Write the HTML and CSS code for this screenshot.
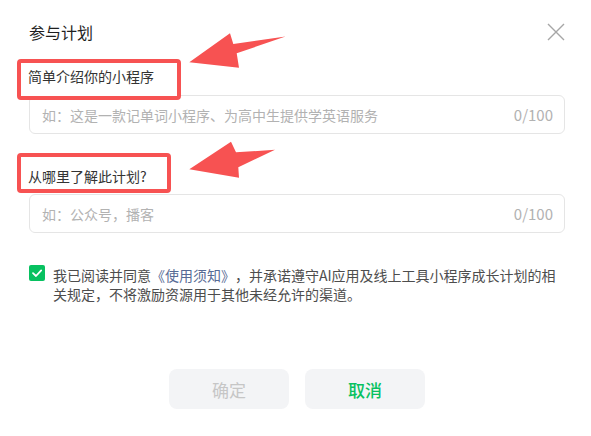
FILE: index.html
```html
<!DOCTYPE html>
<html lang="zh-CN">
<head>
    <meta charset="UTF-8">
    <meta name="viewport" content="width=device-width, initial-scale=1.0">
    <title>参与计划</title>
    <link rel="stylesheet" href="styles.css">
</head>
<body>
    <div class="dialog">
        <div class="dialog-header">
            <h2 class="dialog-title">参与计划</h2>
            <button class="close-btn" aria-label="关闭">
                <svg width="18" height="18" viewBox="0 0 18 18">
                    <path d="M1 1 L17 17 M17 1 L1 17" stroke="#a6a6a6" stroke-width="1.4" fill="none"/>
                </svg>
            </button>
        </div>

        <div class="mark mark-first">
            <label for="intro">简单介绍你的小程序</label>
        </div>
        <div class="text-field text-field-first">
            <input type="text" id="intro" placeholder="如：这是一款记单词小程序、为高中生提供学英语服务">
            <span class="counter">0/100</span>
        </div>

        <div class="mark mark-second">
            <label for="source">从哪里了解此计划?</label>
        </div>
        <div class="text-field text-field-second">
            <input type="text" id="source" placeholder="如：公众号，播客">
            <span class="counter">0/100</span>
        </div>

        <div class="agreement">
            <span class="checkbox">
                <svg width="16" height="16" viewBox="0 0 16 16">
                    <path d="M4 8.2 L7 11 L12.2 5.4" stroke="#fff" stroke-width="1.8" fill="none" stroke-linecap="round" stroke-linejoin="round"/>
                </svg>
            </span>
            <p class="agreement-text">我已阅读并同意<a href="#">《使用须知》</a>，并承诺遵守AI应用及线上工具小程序成长计划的相关规定，不将激励资源用于其他未经允许的渠道。</p>
        </div>

        <div class="actions">
            <button class="btn btn-confirm" disabled>确定</button>
            <button class="btn btn-cancel">取消</button>
        </div>

        <!-- annotation arrows -->
        <svg class="arrows" width="591" height="436" viewBox="0 0 591 436">
            <polygon points="189.3,62.3 230,33.3 233.3,44 285.5,36.5 236.7,53.3 239,67.7" fill="#f75252"/>
            <polygon points="189.3,169.3 231,141.7 236,152.3 275,149.8 238.3,167.3 239,177.7" fill="#f75252"/>
        </svg>
    </div>
</body>
</html>
```

FILE: styles.css
```css
:root {
    --wx-green: #07c160;
    --mark-red: #f75252;
    --text: #333333;
    --text-light: #b2b2b2;
    --line: #e5e5e5;
}

* {
    margin: 0;
    padding: 0;
    box-sizing: border-box;
}

body {
    background: #ffffff;
    font-family: "Noto Sans CJK SC", "Noto Sans", "Liberation Sans", sans-serif;
    color: var(--text);
    text-spacing-trim: space-all;
}

.dialog {
    position: relative;
    width: 591px;
    height: 436px;
    padding: 21px 26px 0 29px;
}

.dialog-header {
    display: flex;
    justify-content: space-between;
    align-items: center;
    height: 22px;
}

.dialog-title {
    font-size: 16px;
    font-weight: 400;
    line-height: 22px;
    color: #1f1f1f;
}

.close-btn {
    display: flex;
    background: none;
    border: none;
    cursor: pointer;
}

.mark {
    position: relative;
    z-index: 1;
    display: flex;
    align-items: center;
    margin-left: -12px;
    border: 4px solid var(--mark-red);
    border-radius: 4px;
    background: #ffffff;
}

.mark label {
    font-size: 14px;
    line-height: 20px;
    color: var(--text);
}

.mark-first {
    width: 164px;
    height: 41px;
    margin-top: 16px;
    padding: 0 0 7px 7px;
}

.mark-second {
    width: 154px;
    height: 40px;
    margin-top: 19px;
    padding: 6px 0 0 7px;
}

.text-field {
    display: flex;
    align-items: center;
    height: 39px;
    padding: 0 11px 0 12px;
    border: 1px solid var(--line);
    border-radius: 6px;
}

.text-field-first {
    margin-top: -5px;
}

.text-field-second {
    margin-top: 1px;
}

.text-field input {
    flex: 1;
    min-width: 0;
    border: none;
    outline: none;
    font-family: inherit;
    font-size: 14px;
    color: var(--text);
    background: transparent;
}

.text-field input::placeholder {
    color: var(--text-light);
}

.counter {
    font-size: 15px;
    color: var(--text-light);
}

.agreement {
    display: flex;
    gap: 8px;
    margin-top: 32px;
}

.checkbox {
    flex: none;
    display: flex;
    width: 16px;
    height: 16px;
    border-radius: 2px;
    background: var(--wx-green);
}

.agreement-text {
    padding-top: 1px;
    font-size: 14px;
    line-height: 19px;
    color: #4d4d4d;
}

.agreement-text a {
    color: #576b95;
    text-decoration: none;
}

.actions {
    display: flex;
    justify-content: center;
    gap: 16px;
    margin-top: 65px;
}

.btn {
    width: 120px;
    height: 40px;
    border: none;
    border-radius: 8px;
    background: #f3f4f6;
    font-family: inherit;
    font-size: 17px;
    cursor: pointer;
}

.btn-confirm {
    color: #c6c6c6;
    cursor: default;
}

.btn-cancel {
    color: var(--wx-green);
    font-weight: 500;
}

.arrows {
    position: absolute;
    top: 0;
    left: 0;
    pointer-events: none;
}
```
